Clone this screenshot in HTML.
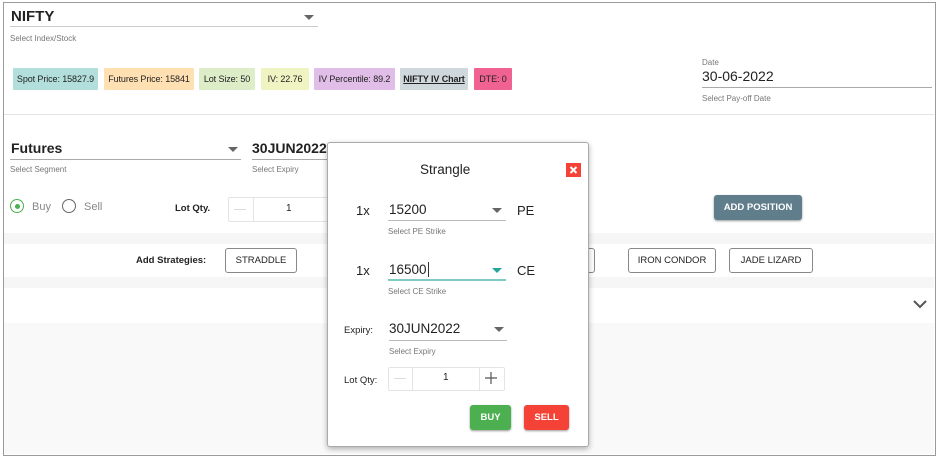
<!DOCTYPE html><html><head><style>
body{margin:0;width:940px;height:461px;background:#fff;font-family:"Liberation Sans",sans-serif;position:relative;overflow:hidden;color:#222}
.a{position:absolute}
.frame{left:3px;top:2px;width:931px;height:452px;border:1px solid #9a9a9a}
.sm{font-size:8px;color:#777}
.chip{position:absolute;top:68px;height:22px;line-height:22px;font-size:9px;text-align:center;color:#222;border-radius:1px;letter-spacing:-0.1px}
.tri{width:0;height:0;border-left:5px solid transparent;border-right:5px solid transparent;border-top:5px solid #666}
.btn{position:absolute;height:23px;border:1px solid #888;border-radius:3px;font-size:9.5px;line-height:23px;text-align:center;background:#fff}
.band{position:absolute;left:4px;width:930px;background:#f6f6f6}
</style></head><body>
<div class="a frame"></div>
<div class="a" style="left:11px;top:8px;font-size:15px;font-weight:bold">NIFTY</div>
<div class="a tri" style="left:304px;top:15px"></div>
<div class="a" style="left:10px;top:26px;width:308px;border-top:1px solid #ccc"></div>
<div class="a sm" style="left:10px;top:34px">Select Index/Stock</div>
<div class="chip" style="left:13px;width:85px;background:#b2dfdb">Spot Price: 15827.9</div>
<div class="chip" style="left:104px;width:90px;background:#ffe0b2">Futures Price: 15841</div>
<div class="chip" style="left:199px;width:56px;background:#dcedc8">Lot Size: 50</div>
<div class="chip" style="left:261px;width:48px;background:#f0f4c3">IV: 22.76</div>
<div class="chip" style="left:314px;width:81px;background:#e1bee7">IV Percentile: 89.2</div>
<div class="chip" style="left:400px;width:68px;background:#cfd8dc;text-decoration:underline;font-weight:bold">NIFTY IV Chart</div>
<div class="chip" style="left:474px;width:38px;background:#f06292">DTE: 0</div>
<div class="a sm" style="left:702px;top:58px;font-size:8px">Date</div>
<div class="a" style="left:702px;top:68px;font-size:14px">30-06-2022</div>
<div class="a" style="left:702px;top:87px;width:230px;border-top:1px solid #aaa"></div>
<div class="a sm" style="left:702px;top:94px">Select Pay-off Date</div>
<div class="a" style="left:4px;top:114px;width:930px;border-top:1px solid #e4e4e4"></div>

<div class="a" style="left:11px;top:140px;font-size:14px;font-weight:bold">Futures</div>
<div class="a tri" style="left:228px;top:147px"></div>
<div class="a" style="left:10px;top:159px;width:231px;border-top:1px solid #aaa"></div>
<div class="a sm" style="left:10px;top:165px">Select Segment</div>
<div class="a" style="left:252px;top:140px;font-size:14px;font-weight:bold">30JUN2022</div>
<div class="a" style="left:252px;top:159px;width:80px;border-top:1px solid #aaa"></div>
<div class="a sm" style="left:252px;top:165px">Select Expiry</div>

<div class="a" style="left:10px;top:199px;width:12px;height:12px;border:1.5px solid #4caf50;border-radius:50%"></div>
<div class="a" style="left:15px;top:204px;width:5px;height:5px;background:#4caf50;border-radius:50%"></div>
<div class="a" style="left:32px;top:201px;font-size:11px;color:#888">Buy</div>
<div class="a" style="left:62px;top:199px;width:12px;height:12px;border:1.5px solid #666;border-radius:50%"></div>
<div class="a" style="left:84px;top:201px;font-size:11px;color:#888">Sell</div>
<div class="a" style="left:175px;top:203px;font-size:9.5px;font-weight:bold">Lot Qty.</div>
<div class="a" style="left:228px;top:197px;width:110px;height:23px;border:1px solid #e4e4e4;border-radius:2px"></div>
<div class="a" style="left:253px;top:197px;height:24px;border-left:1px solid #e4e4e4"></div>
<div class="a" style="left:234px;top:209px;width:12px;border-top:1px solid #ddd"></div>
<div class="a" style="left:286px;top:203px;font-size:10px">1</div>
<div class="btn" style="left:714px;top:195px;width:86px;background:#607d8b;border-color:#607d8b;color:#fff;font-weight:bold;box-shadow:0 1px 2px #999">ADD POSITION</div>

<div class="band" style="top:233px;height:11px"></div>
<div class="a" style="left:136px;top:255px;font-size:9.5px;font-weight:bold">Add Strategies:</div>
<div class="btn" style="left:225px;top:248px;width:70px">STRADDLE</div>
<div class="btn" style="left:560px;top:248px;width:33px"></div>
<div class="btn" style="left:628px;top:248px;width:86px">IRON CONDOR</div>
<div class="btn" style="left:729px;top:248px;width:82px">JADE LIZARD</div>
<div class="band" style="top:277px;height:11px"></div>
<svg class="a" style="left:912px;top:298px" width="16" height="12"><path d="M2 3 L8 9 L14 3" stroke="#555" stroke-width="2" fill="none"/></svg>
<div class="band" style="top:323px;height:131px;background:#f9f9f9"></div>

<div class="a" style="left:327px;top:142px;width:260px;height:303px;background:#fff;border:1px solid #aaa;border-radius:3px;box-shadow:0 2px 6px rgba(0,0,0,.3)"></div>
<div class="a" style="left:420px;top:162px;font-size:13.5px">Strangle</div>
<svg class="a" style="left:566px;top:163px" width="15" height="14"><rect width="15" height="14" fill="#f44336"/><path d="M4.5 4 L10.5 10 M10.5 4 L4.5 10" stroke="#fff" stroke-width="2"/></svg>
<div class="a" style="left:356px;top:203px;font-size:13px">1x</div>
<div class="a" style="left:389px;top:202px;font-size:13.5px">15200</div>
<div class="a tri" style="left:492px;top:208px"></div>
<div class="a" style="left:388px;top:220px;width:118px;border-top:1px solid #bbb"></div>
<div class="a sm" style="left:388px;top:227px">Select PE Strike</div>
<div class="a" style="left:517px;top:203px;font-size:13px">PE</div>
<div class="a" style="left:356px;top:263px;font-size:13px">1x</div>
<div class="a" style="left:389px;top:262px;font-size:13.5px">16500<span style="border-left:1px solid #333;margin-left:1px"></span></div>
<div class="a tri" style="left:492px;top:268px;border-top-color:#26a69a"></div>
<div class="a" style="left:388px;top:279px;width:118px;border-top:2px solid #80cbc4"></div>
<div class="a sm" style="left:388px;top:287px">Select CE Strike</div>
<div class="a" style="left:517px;top:263px;font-size:13px">CE</div>
<div class="a" style="left:344px;top:325px;font-size:9.5px">Expiry:</div>
<div class="a" style="left:389px;top:321px;font-size:13.5px">30JUN2022</div>
<div class="a tri" style="left:494px;top:327px"></div>
<div class="a" style="left:389px;top:340px;width:118px;border-top:1px solid #bbb"></div>
<div class="a sm" style="left:389px;top:347px">Select Expiry</div>
<div class="a" style="left:344px;top:375px;font-size:9.5px">Lot Qty:</div>
<div class="a" style="left:388px;top:367px;width:115px;height:22px;border:1px solid #e4e4e4;border-radius:2px"></div>
<div class="a" style="left:412px;top:367px;height:23px;border-left:1px solid #e4e4e4"></div>
<div class="a" style="left:479px;top:367px;height:23px;border-left:1px solid #e4e4e4"></div>
<div class="a" style="left:394px;top:378px;width:12px;border-top:1px solid #ddd"></div>
<div class="a" style="left:443px;top:372px;font-size:10px">1</div>
<svg class="a" style="left:484px;top:371px" width="14" height="14"><path d="M7 1 V13 M1 7 H13" stroke="#555" stroke-width="1.2"/></svg>
<div class="btn" style="left:470px;top:405px;width:39px;background:#4caf50;border-color:#4caf50;color:#fff;font-weight:bold;box-shadow:0 1px 2px #999">BUY</div>
<div class="btn" style="left:524px;top:405px;width:43px;background:#f44336;border-color:#f44336;color:#fff;font-weight:bold;box-shadow:0 1px 2px #999">SELL</div>
</body></html>
